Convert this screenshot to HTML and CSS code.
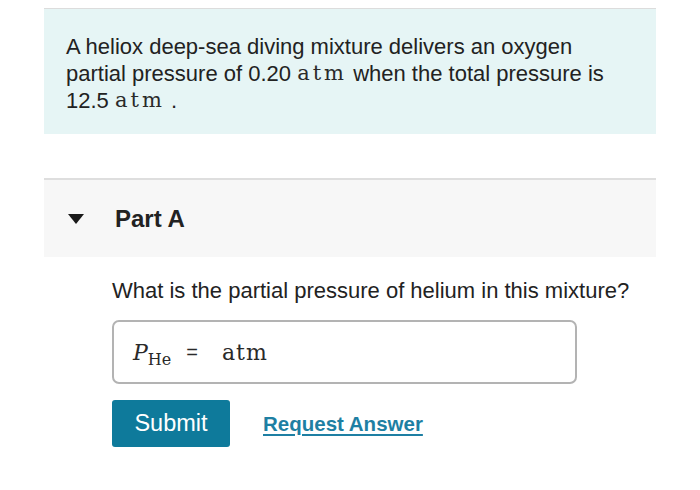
FILE: index.html
```html
<!DOCTYPE html>
<html>
<head>
<meta charset="utf-8">
<link rel="stylesheet" href="styles.css">
</head>
<body>
<div class="page">
  <div class="intro">
    <p>A heliox deep-sea diving mixture delivers an oxygen partial pressure of 0.20 <span class="m">atm</span> when the total pressure is 12.5 <span class="m">atm</span> .</p>
  </div>
  <div class="part">
    <div class="part-head">
      <span class="tri"></span>
      <span class="part-title">Part A</span>
    </div>
    <div class="part-body">
      <p class="question">What is the partial pressure of helium in this mixture?</p>
      <div class="answer">
        <span class="var"><i>P</i><sub>He</sub></span>
        <span class="eq">=</span>
        <span class="unit">atm</span>
      </div>
      <div class="actions">
        <button class="submit">Submit</button>
        <a class="request" href="#">Request Answer</a>
      </div>
    </div>
  </div>
</div>
</body>
</html>
```
FILE: styles.css
```css
* { box-sizing: border-box; }
html, body { margin: 0; padding: 0; background: #fff; }
body {
  font-family: "Liberation Sans", Arial, sans-serif;
  color: #222;
}
.page {
  width: 612px;
  margin: 0 0 0 44px;
  padding-top: 8px;
}
.intro {
  border-top: 1px solid #dcdcdc;
  background: #e6f5f5;
  padding: 24px 20px 20px 22px;
  font-size: 22px;
  line-height: 27px;
}
.intro p { margin: 0; }
.m {
  display: inline-block;
  vertical-align: top;
  height: 27px;
  line-height: 27px;
  font-family: "DejaVu Serif", "Liberation Serif", serif;
  font-size: 21px;
  letter-spacing: 3px;
  color: #2a2a2a;
}
.part {
  margin-top: 44px;
}
.part-head {
  border-top: 2px solid #dedede;
  background: #f7f7f7;
  height: 79px;
  display: flex;
  align-items: center;
  padding-left: 24px;
}
.tri {
  width: 0; height: 0;
  border-left: 8.5px solid transparent;
  border-right: 8.5px solid transparent;
  border-top: 10px solid #1a1a1a;
  margin-right: 31px;
}
.part-title {
  font-weight: bold;
  font-size: 24px;
  color: #222;
}
.part-body {
  padding-left: 68px;
}
.question {
  margin: 21px 0 0 0;
  font-size: 22px;
  line-height: 26px;
}
.answer {
  margin-top: 16px;
  width: 465px;
  height: 64px;
  border: 2px solid #b3b3b3;
  border-radius: 7px;
  display: flex;
  align-items: center;
  padding-left: 19px;
  font-family: "DejaVu Serif", "Liberation Serif", serif;
  color: #2a2a2a;
}
.var { font-size: 22px; }
.var i { font-style: italic; }
.var sub { font-size: 16px; vertical-align: -5px; line-height: 0; }
.eq {
  font-family: "Liberation Sans", Arial, sans-serif;
  font-size: 20px;
  margin: 0 24px 0 15px;
}
.unit { font-size: 22px; letter-spacing: 1px; }
.actions {
  margin-top: 16px;
  display: flex;
  align-items: center;
}
.submit {
  width: 118px;
  height: 47px;
  background: #0e7a9b;
  color: #fff;
  border: none;
  border-radius: 3px;
  font-family: "Liberation Sans", Arial, sans-serif;
  font-size: 23.5px;
  padding: 0;
}
.request {
  margin-left: 33px;
  color: #1e7fa3;
  font-weight: bold;
  font-size: 20.5px;
  text-decoration: underline;
  text-underline-offset: 3px;
}
```
